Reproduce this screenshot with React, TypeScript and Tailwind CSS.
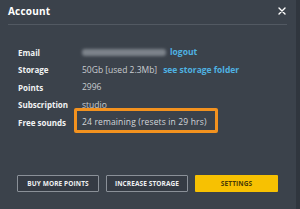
import React from "react";

const rows: { label: string; value: React.ReactNode }[] = [
  {
    label: "Email",
    value: (
      <span className="flex items-center gap-[4px]">
        <span className="inline-block w-[84px] h-[7px] rounded-[3px] bg-[#8d939b] blur-[1.5px] opacity-80" />
        <span className="font-bold text-[#4fb2e2]">logout</span>
      </span>
    ),
  },
  {
    label: "Storage",
    value: (
      <span>
        50Gb [used 2.3Mb]
        <span className="ml-[6px] font-bold text-[#4fb2e2]">see storage folder</span>
      </span>
    ),
  },
  { label: "Points", value: "2996" },
  { label: "Subscription", value: "studio" },
];

export default function App() {
  return (
    <div
      className="w-[300px] h-[209px] flex bg-[#3b424b] overflow-hidden text-white"
      style={{ fontFamily: '"Open Sans", "Liberation Sans", sans-serif' }}
    >
      <div className="flex-1 flex flex-col pl-2 pr-[9px]">
        {/* Header */}
        <div className="h-[25px] pb-[2px] flex items-center justify-between border-b border-[#525962]">
          <span className="text-[10px] font-bold tracking-[0.2px]">Account</span>
          <svg width="8" height="8" viewBox="0 0 8 8" className="mr-[1px]">
            <path d="M1 1L7 7M7 1L1 7" stroke="#ffffff" strokeWidth="1.4" strokeLinecap="round" />
          </svg>
        </div>

        {/* Details */}
        <div className="mt-[19px] ml-[10px] grid grid-cols-[64px_1fr] auto-rows-[17.5px] items-center text-[8px]">
          {rows.map((r) => (
            <React.Fragment key={r.label}>
              <span className="font-bold text-[#f2f3f4]">{r.label}</span>
              <span className="text-[8.5px] text-[#c9ccd0]">{r.value}</span>
            </React.Fragment>
          ))}
          <span className="font-bold text-[#f2f3f4]">Free sounds</span>
          <span className="relative text-[8.5px] tracking-[0.15px] text-[#d3d6da]">
            24 remaining (resets in 29 hrs)
            <span className="absolute left-[-8px] top-[-8px] w-[144px] h-[25px] border-[3px] border-[#f3921f] rounded-[2px]" />
          </span>
        </div>

        {/* Actions */}
        <div className="mt-auto mb-[17px] ml-[9px] flex gap-[7px] text-[6.5px] font-bold tracking-[0.1px]">
          <button className="w-[82px] h-[17px] border border-[#8a9098] rounded-[1px] bg-[#353b44] text-[#eef0f2]">
            BUY MORE POINTS
          </button>
          <button className="w-[82px] h-[17px] border border-[#8a9098] rounded-[1px] bg-[#353b44] text-[#eef0f2]">
            INCREASE STORAGE
          </button>
          <button className="w-[83px] h-[17px] rounded-[1px] bg-[#f7c102] text-[#4a3b06]">
            SETTINGS
          </button>
        </div>
      </div>
      <div className="w-[4px] h-full bg-[#30363e]" />
    </div>
  );
}
